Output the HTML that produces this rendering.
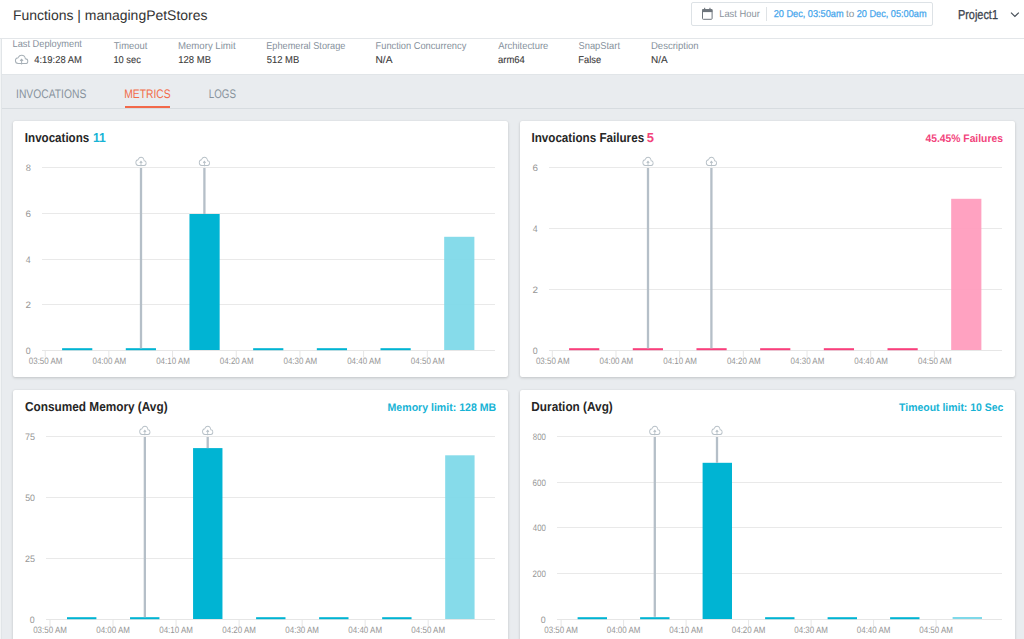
<!DOCTYPE html>
<html><head><meta charset="utf-8">
<style>
html,body{margin:0;padding:0;}
body{width:1024px;height:639px;overflow:hidden;position:relative;background:#e9ecef;font-family:'Liberation Sans', sans-serif;}
.a{position:absolute;}
.card{position:absolute;background:#fff;border-radius:2px;box-shadow:0 1px 3px rgba(0,0,0,0.17), 0 0 1px rgba(0,0,0,0.10);}
</style></head><body>
<div class="a" style="left:0;top:0;width:1024px;height:38px;background:#fff;"></div>
<div class="a" style="left:0;top:38px;width:1024px;height:1px;background:#e3e6e9;"></div>
<div class="a" style="left:0;top:39px;width:1px;height:600px;background:#f3f5f6;"></div>
<div class="a" style="left:1px;top:39px;width:1px;height:600px;background:#e1e5e8;"></div>
<div class="a" style="left:2px;top:39px;width:1022px;height:35px;background:#fff;"></div>
<div class="a" style="left:2px;top:74px;width:1022px;height:1px;background:#e1e5e8;"></div>
<div class="a" style="left:2px;top:108px;width:1022px;height:1px;background:#d7dce0;"></div>
<div class="a" style="left:691px;top:2px;width:240px;height:22px;border:1px solid #dde2e6;border-radius:2px;background:#fff;"></div>
<svg class="a" style="left:700px;top:6px" width="15" height="16" viewBox="0 0 15 16">
 <rect x="2.5" y="3.6" width="9.6" height="9.7" rx="0.8" fill="none" stroke="#6e757c" stroke-width="1"/>
 <rect x="2.2" y="3.2" width="10.2" height="2.9" fill="#6e757c"/>
 <rect x="4.1" y="1.8" width="1.1" height="2" fill="#6e757c"/><rect x="9.4" y="1.8" width="1.1" height="2" fill="#6e757c"/>
</svg>
<div class="a" style="left:766px;top:7px;width:1px;height:14px;background:#dfe3e6;"></div>
<svg class="a" style="left:1010px;top:11px" width="10" height="7" viewBox="0 0 10 7"><path d="M1,1.6 L4.9,5.4 L8.8,1.6" fill="none" stroke="#454d56" stroke-width="1.15"/></svg>
<svg class="a" style="left:0;top:0" width="40" height="80"><g transform="translate(14.84,52.20) scale(0.5636,0.6000)" fill="none" stroke="#a7b0b7" stroke-width="1.72"><path d="M18.7,11 C18.2,7.6 15.4,5 12,5 C9.5,5 7.3,6.4 6.2,8.5 L5.8,9.1 C3.1,9.4 1,11.4 1,14 C1,16.8 3.2,19 6,19 H19 C21.2,19 23,17.2 23,15 C23,12.9 21.4,11.2 19.3,11.1 Z"/><path d="M12,20.5 V11.8 M9.3,14.5 L12,11.8 L14.7,14.5"/></g></svg>
<div class="a" style="left:125px;top:106px;width:45px;height:2px;background:#f2694a;"></div>

<div class="card" style="left:13px;top:121px;width:495px;height:256px;"></div>
<div class="card" style="left:520px;top:121px;width:495px;height:256px;"></div>
<div class="card" style="left:13px;top:390px;width:495px;height:260px;"></div>
<div class="card" style="left:520px;top:390px;width:495px;height:260px;"></div>

<svg class="a" style="left:0;top:0;font-family:'Liberation Sans', sans-serif;text-rendering:geometricPrecision" width="1024" height="639" viewBox="0 0 1024 639">
<rect x="42" y="304.00" width="453" height="1" fill="#e9e9e9"/>
<rect x="42" y="259.00" width="453" height="1" fill="#e9e9e9"/>
<rect x="42" y="213.00" width="453" height="1" fill="#e9e9e9"/>
<rect x="42" y="167.00" width="453" height="1" fill="#e9e9e9"/>
<rect x="42" y="350.00" width="453" height="1" fill="#e6e6e6"/>
<rect x="44.70" y="350.50" width="1" height="7" fill="#e6e6e6"/>
<rect x="108.38" y="350.50" width="1" height="7" fill="#e6e6e6"/>
<rect x="172.06" y="350.50" width="1" height="7" fill="#e6e6e6"/>
<rect x="235.74" y="350.50" width="1" height="7" fill="#e6e6e6"/>
<rect x="299.42" y="350.50" width="1" height="7" fill="#e6e6e6"/>
<rect x="363.10" y="350.50" width="1" height="7" fill="#e6e6e6"/>
<rect x="426.78" y="350.50" width="1" height="7" fill="#e6e6e6"/>
<rect x="62.10" y="348.20" width="30.2" height="2" fill="#00b4d3"/>
<rect x="125.78" y="348.20" width="30.2" height="2" fill="#00b4d3"/>
<rect x="189.46" y="214.00" width="30.2" height="136.00" fill="#00b4d3"/>
<rect x="253.14" y="348.20" width="30.2" height="2" fill="#00b4d3"/>
<rect x="316.82" y="348.20" width="30.2" height="2" fill="#00b4d3"/>
<rect x="380.50" y="348.20" width="30.2" height="2" fill="#00b4d3"/>
<rect x="444.18" y="236.80" width="30.2" height="113.20" fill="#7dd8e8" fill-opacity="0.93"/>
<rect x="139.85" y="168.00" width="2.3" height="180.30" fill="#b5bfc8"/>
<g transform="translate(135.38,154.41) scale(0.4682,0.5786)" fill="none" stroke="#b7c0c7" stroke-width="1.82"><path d="M18.7,11 C18.2,7.6 15.4,5 12,5 C9.5,5 7.3,6.4 6.2,8.5 L5.8,9.1 C3.1,9.4 1,11.4 1,14 C1,16.8 3.2,19 6,19 H19 C21.2,19 23,17.2 23,15 C23,12.9 21.4,11.2 19.3,11.1 Z"/><path d="M12,20.5 V11.8 M9.3,14.5 L12,11.8 L14.7,14.5"/></g>
<rect x="203.25" y="168.00" width="2.3" height="46.00" fill="#b5bfc8"/>
<g transform="translate(198.78,154.41) scale(0.4682,0.5786)" fill="none" stroke="#b7c0c7" stroke-width="1.82"><path d="M18.7,11 C18.2,7.6 15.4,5 12,5 C9.5,5 7.3,6.4 6.2,8.5 L5.8,9.1 C3.1,9.4 1,11.4 1,14 C1,16.8 3.2,19 6,19 H19 C21.2,19 23,17.2 23,15 C23,12.9 21.4,11.2 19.3,11.1 Z"/><path d="M12,20.5 V11.8 M9.3,14.5 L12,11.8 L14.7,14.5"/></g>
<rect x="549" y="289.00" width="453" height="1" fill="#e9e9e9"/>
<rect x="549" y="228.00" width="453" height="1" fill="#e9e9e9"/>
<rect x="549" y="167.00" width="453" height="1" fill="#e9e9e9"/>
<rect x="549" y="350.00" width="453" height="1" fill="#e6e6e6"/>
<rect x="551.80" y="350.50" width="1" height="7" fill="#e6e6e6"/>
<rect x="615.48" y="350.50" width="1" height="7" fill="#e6e6e6"/>
<rect x="679.16" y="350.50" width="1" height="7" fill="#e6e6e6"/>
<rect x="742.84" y="350.50" width="1" height="7" fill="#e6e6e6"/>
<rect x="806.52" y="350.50" width="1" height="7" fill="#e6e6e6"/>
<rect x="870.20" y="350.50" width="1" height="7" fill="#e6e6e6"/>
<rect x="933.88" y="350.50" width="1" height="7" fill="#e6e6e6"/>
<rect x="569.10" y="348.20" width="30.2" height="2" fill="#f93f7c"/>
<rect x="632.78" y="348.20" width="30.2" height="2" fill="#f93f7c"/>
<rect x="696.46" y="348.20" width="30.2" height="2" fill="#f93f7c"/>
<rect x="760.14" y="348.20" width="30.2" height="2" fill="#f93f7c"/>
<rect x="823.82" y="348.20" width="30.2" height="2" fill="#f93f7c"/>
<rect x="887.50" y="348.20" width="30.2" height="2" fill="#f93f7c"/>
<rect x="951.18" y="198.80" width="30.2" height="151.20" fill="#ff9bbc" fill-opacity="0.93"/>
<rect x="646.85" y="168.00" width="2.3" height="180.30" fill="#b5bfc8"/>
<g transform="translate(642.38,154.41) scale(0.4682,0.5786)" fill="none" stroke="#b7c0c7" stroke-width="1.82"><path d="M18.7,11 C18.2,7.6 15.4,5 12,5 C9.5,5 7.3,6.4 6.2,8.5 L5.8,9.1 C3.1,9.4 1,11.4 1,14 C1,16.8 3.2,19 6,19 H19 C21.2,19 23,17.2 23,15 C23,12.9 21.4,11.2 19.3,11.1 Z"/><path d="M12,20.5 V11.8 M9.3,14.5 L12,11.8 L14.7,14.5"/></g>
<rect x="710.25" y="168.00" width="2.3" height="180.30" fill="#b5bfc8"/>
<g transform="translate(705.78,154.41) scale(0.4682,0.5786)" fill="none" stroke="#b7c0c7" stroke-width="1.82"><path d="M18.7,11 C18.2,7.6 15.4,5 12,5 C9.5,5 7.3,6.4 6.2,8.5 L5.8,9.1 C3.1,9.4 1,11.4 1,14 C1,16.8 3.2,19 6,19 H19 C21.2,19 23,17.2 23,15 C23,12.9 21.4,11.2 19.3,11.1 Z"/><path d="M12,20.5 V11.8 M9.3,14.5 L12,11.8 L14.7,14.5"/></g>
<rect x="46" y="558.00" width="449" height="1" fill="#e9e9e9"/>
<rect x="46" y="497.00" width="449" height="1" fill="#e9e9e9"/>
<rect x="46" y="436.00" width="449" height="1" fill="#e9e9e9"/>
<rect x="46" y="619.00" width="449" height="1" fill="#e6e6e6"/>
<rect x="49.50" y="619.50" width="1" height="7" fill="#e6e6e6"/>
<rect x="112.53" y="619.50" width="1" height="7" fill="#e6e6e6"/>
<rect x="175.56" y="619.50" width="1" height="7" fill="#e6e6e6"/>
<rect x="238.59" y="619.50" width="1" height="7" fill="#e6e6e6"/>
<rect x="301.62" y="619.50" width="1" height="7" fill="#e6e6e6"/>
<rect x="364.65" y="619.50" width="1" height="7" fill="#e6e6e6"/>
<rect x="427.68" y="619.50" width="1" height="7" fill="#e6e6e6"/>
<rect x="67.00" y="617.20" width="29.4" height="2" fill="#00b4d3"/>
<rect x="130.03" y="617.20" width="29.4" height="2" fill="#00b4d3"/>
<rect x="193.06" y="448.10" width="29.4" height="170.90" fill="#00b4d3"/>
<rect x="256.09" y="617.20" width="29.4" height="2" fill="#00b4d3"/>
<rect x="319.12" y="617.20" width="29.4" height="2" fill="#00b4d3"/>
<rect x="382.15" y="617.20" width="29.4" height="2" fill="#00b4d3"/>
<rect x="445.18" y="455.30" width="29.4" height="163.70" fill="#7dd8e8" fill-opacity="0.93"/>
<rect x="143.70" y="437.00" width="2.3" height="180.20" fill="#b5bfc8"/>
<g transform="translate(139.23,423.41) scale(0.4682,0.5786)" fill="none" stroke="#b7c0c7" stroke-width="1.82"><path d="M18.7,11 C18.2,7.6 15.4,5 12,5 C9.5,5 7.3,6.4 6.2,8.5 L5.8,9.1 C3.1,9.4 1,11.4 1,14 C1,16.8 3.2,19 6,19 H19 C21.2,19 23,17.2 23,15 C23,12.9 21.4,11.2 19.3,11.1 Z"/><path d="M12,20.5 V11.8 M9.3,14.5 L12,11.8 L14.7,14.5"/></g>
<rect x="206.55" y="437.00" width="2.3" height="11.10" fill="#b5bfc8"/>
<g transform="translate(202.08,423.41) scale(0.4682,0.5786)" fill="none" stroke="#b7c0c7" stroke-width="1.82"><path d="M18.7,11 C18.2,7.6 15.4,5 12,5 C9.5,5 7.3,6.4 6.2,8.5 L5.8,9.1 C3.1,9.4 1,11.4 1,14 C1,16.8 3.2,19 6,19 H19 C21.2,19 23,17.2 23,15 C23,12.9 21.4,11.2 19.3,11.1 Z"/><path d="M12,20.5 V11.8 M9.3,14.5 L12,11.8 L14.7,14.5"/></g>
<rect x="557" y="573.00" width="445" height="1" fill="#e9e9e9"/>
<rect x="557" y="527.00" width="445" height="1" fill="#e9e9e9"/>
<rect x="557" y="482.00" width="445" height="1" fill="#e9e9e9"/>
<rect x="557" y="436.00" width="445" height="1" fill="#e9e9e9"/>
<rect x="557" y="619.00" width="445" height="1" fill="#e6e6e6"/>
<rect x="560.60" y="619.50" width="1" height="7" fill="#e6e6e6"/>
<rect x="623.10" y="619.50" width="1" height="7" fill="#e6e6e6"/>
<rect x="685.60" y="619.50" width="1" height="7" fill="#e6e6e6"/>
<rect x="748.10" y="619.50" width="1" height="7" fill="#e6e6e6"/>
<rect x="810.60" y="619.50" width="1" height="7" fill="#e6e6e6"/>
<rect x="873.10" y="619.50" width="1" height="7" fill="#e6e6e6"/>
<rect x="935.60" y="619.50" width="1" height="7" fill="#e6e6e6"/>
<rect x="577.60" y="617.20" width="29.4" height="2" fill="#00b4d3"/>
<rect x="640.10" y="617.20" width="29.4" height="2" fill="#00b4d3"/>
<rect x="702.60" y="462.80" width="29.4" height="156.20" fill="#00b4d3"/>
<rect x="765.10" y="617.20" width="29.4" height="2" fill="#00b4d3"/>
<rect x="827.60" y="617.20" width="29.4" height="2" fill="#00b4d3"/>
<rect x="890.10" y="617.20" width="29.4" height="2" fill="#00b4d3"/>
<rect x="952.60" y="617.00" width="29.4" height="2" fill="#00b4d3" fill-opacity="0.5"/>
<rect x="653.65" y="437.00" width="2.3" height="179.80" fill="#b5bfc8"/>
<g transform="translate(649.18,423.41) scale(0.4682,0.5786)" fill="none" stroke="#b7c0c7" stroke-width="1.82"><path d="M18.7,11 C18.2,7.6 15.4,5 12,5 C9.5,5 7.3,6.4 6.2,8.5 L5.8,9.1 C3.1,9.4 1,11.4 1,14 C1,16.8 3.2,19 6,19 H19 C21.2,19 23,17.2 23,15 C23,12.9 21.4,11.2 19.3,11.1 Z"/><path d="M12,20.5 V11.8 M9.3,14.5 L12,11.8 L14.7,14.5"/></g>
<rect x="715.85" y="437.00" width="2.3" height="25.80" fill="#b5bfc8"/>
<g transform="translate(711.38,423.41) scale(0.4682,0.5786)" fill="none" stroke="#b7c0c7" stroke-width="1.82"><path d="M18.7,11 C18.2,7.6 15.4,5 12,5 C9.5,5 7.3,6.4 6.2,8.5 L5.8,9.1 C3.1,9.4 1,11.4 1,14 C1,16.8 3.2,19 6,19 H19 C21.2,19 23,17.2 23,15 C23,12.9 21.4,11.2 19.3,11.1 Z"/><path d="M12,20.5 V11.8 M9.3,14.5 L12,11.8 L14.7,14.5"/></g>
<text transform="translate(12.90,20.00) scale(0.9974,1)" font-size="14" fill="#333">Functions | managingPetStores</text>
<text transform="translate(719.20,17.00) scale(0.9365,1)" font-size="10" fill="#8a939c">Last Hour</text>
<text transform="translate(773.67,17.00) scale(0.9179,1)" font-size="10" fill="#44a5ec" stroke="#44a5ec" stroke-width="0.25">20 Dec, 03:50am</text>
<text x="845.90" y="17.00" font-size="10" fill="#8a939c">to</text>
<text transform="translate(856.67,17.00) scale(0.9179,1)" font-size="10" fill="#44a5ec" stroke="#44a5ec" stroke-width="0.25">20 Dec, 05:00am</text>
<text transform="translate(957.97,18.90) scale(0.8387,1)" font-size="13" fill="#3b434d" stroke="#3b434d" stroke-width="0.3">Project1</text>
<text transform="translate(12.51,47.00) scale(0.9253,1)" font-size="10" fill="#86919c">Last Deployment</text>
<text transform="translate(113.66,48.70) scale(0.9408,1)" font-size="10" fill="#86919c">Timeout</text>
<text transform="translate(178.03,48.70) scale(0.9595,1)" font-size="10" fill="#86919c">Memory Limit</text>
<text transform="translate(266.21,48.70) scale(0.9188,1)" font-size="10" fill="#86919c">Ephemeral Storage</text>
<text transform="translate(375.55,48.70) scale(0.9278,1)" font-size="10" fill="#86919c">Function Concurrency</text>
<text transform="translate(498.20,48.70) scale(0.9377,1)" font-size="10" fill="#86919c">Architecture</text>
<text transform="translate(578.53,48.70) scale(0.9318,1)" font-size="10" fill="#86919c">SnapStart</text>
<text transform="translate(650.99,48.70) scale(0.9518,1)" font-size="10" fill="#86919c">Description</text>
<text transform="translate(34.30,62.80) scale(0.9380,1)" font-size="10" fill="#3a3a3a" stroke="#3a3a3a" stroke-width="0.1">4:19:28 AM</text>
<text transform="translate(113.44,62.80) scale(0.9287,1)" font-size="10" fill="#3a3a3a" stroke="#3a3a3a" stroke-width="0.1">10 sec</text>
<text transform="translate(178.27,62.80) scale(0.9507,1)" font-size="10" fill="#3a3a3a" stroke="#3a3a3a" stroke-width="0.1">128 MB</text>
<text transform="translate(266.66,62.80) scale(0.9437,1)" font-size="10" fill="#3a3a3a" stroke="#3a3a3a" stroke-width="0.1">512 MB</text>
<text transform="translate(375.49,62.80) scale(1.0156,1)" font-size="10" fill="#3a3a3a" stroke="#3a3a3a" stroke-width="0.1">N/A</text>
<text transform="translate(497.96,62.80) scale(0.9464,1)" font-size="10" fill="#3a3a3a" stroke="#3a3a3a" stroke-width="0.1">arm64</text>
<text transform="translate(578.30,62.80) scale(0.9319,1)" font-size="10" fill="#3a3a3a" stroke="#3a3a3a" stroke-width="0.1">False</text>
<text transform="translate(650.95,62.80) scale(0.9937,1)" font-size="10" fill="#3a3a3a" stroke="#3a3a3a" stroke-width="0.1">N/A</text>
<text transform="translate(16.07,97.90) scale(0.8313,1)" font-size="12.4" fill="#88939d">INVOCATIONS</text>
<text transform="translate(124.27,97.90) scale(0.8313,1)" font-size="12.4" fill="#f26b48">METRICS</text>
<text transform="translate(208.81,97.90) scale(0.7879,1)" font-size="12.4" fill="#88939d">LOGS</text>
<text transform="translate(24.83,142.20) scale(0.8915,1)" font-size="13" font-weight="bold" fill="#262626">Invocations</text>
<text transform="translate(92.90,142.20) scale(0.9333,1)" font-size="13" font-weight="bold" fill="#17b3d5">11</text>
<text transform="translate(531.43,142.10) scale(0.8964,1)" font-size="13" font-weight="bold" fill="#262626">Invocations Failures</text>
<text transform="translate(646.85,142.10) scale(0.9926,1)" font-size="13" font-weight="bold" fill="#f2447c">5</text>
<text transform="translate(925.50,141.60) scale(0.9374,1)" font-size="11" font-weight="bold" fill="#f2447c">45.45% Failures</text>
<text transform="translate(25.05,410.60) scale(0.9079,1)" font-size="13" font-weight="bold" fill="#262626">Consumed Memory (Avg)</text>
<text transform="translate(387.58,410.50) scale(0.9598,1)" font-size="11" font-weight="bold" fill="#17b3d5">Memory limit: 128 MB</text>
<text transform="translate(531.32,410.60) scale(0.9073,1)" font-size="13" font-weight="bold" fill="#262626">Duration (Avg)</text>
<text transform="translate(899.10,410.60) scale(0.9489,1)" font-size="11" font-weight="bold" fill="#17b3d5">Timeout limit: 10 Sec</text>
<text transform="translate(28.78,363.90) scale(0.8684,1)" font-size="9.2" fill="#969696">03:50 AM</text>
<text transform="translate(92.46,363.90) scale(0.8684,1)" font-size="9.2" fill="#969696">04:00 AM</text>
<text transform="translate(156.14,363.90) scale(0.8684,1)" font-size="9.2" fill="#969696">04:10 AM</text>
<text transform="translate(219.82,363.90) scale(0.8684,1)" font-size="9.2" fill="#969696">04:20 AM</text>
<text transform="translate(283.50,363.90) scale(0.8684,1)" font-size="9.2" fill="#969696">04:30 AM</text>
<text transform="translate(347.18,363.90) scale(0.8684,1)" font-size="9.2" fill="#969696">04:40 AM</text>
<text transform="translate(410.86,363.90) scale(0.8684,1)" font-size="9.2" fill="#969696">04:50 AM</text>
<text transform="translate(25.86,354.00) scale(0.9474,1)" font-size="9.3" fill="#969696">0</text>
<text transform="translate(25.57,308.00) scale(1.0588,1)" font-size="9.3" fill="#969696">2</text>
<text transform="translate(25.86,263.00) scale(0.9474,1)" font-size="9.3" fill="#969696">4</text>
<text transform="translate(25.57,217.00) scale(1.0588,1)" font-size="9.3" fill="#969696">6</text>
<text x="25.85" y="171.00" font-size="9.3" fill="#969696">8</text>
<text transform="translate(535.88,363.90) scale(0.8684,1)" font-size="9.2" fill="#969696">03:50 AM</text>
<text transform="translate(599.56,363.90) scale(0.8684,1)" font-size="9.2" fill="#969696">04:00 AM</text>
<text transform="translate(663.24,363.90) scale(0.8684,1)" font-size="9.2" fill="#969696">04:10 AM</text>
<text transform="translate(726.92,363.90) scale(0.8684,1)" font-size="9.2" fill="#969696">04:20 AM</text>
<text transform="translate(790.60,363.90) scale(0.8684,1)" font-size="9.2" fill="#969696">04:30 AM</text>
<text transform="translate(854.28,363.90) scale(0.8684,1)" font-size="9.2" fill="#969696">04:40 AM</text>
<text transform="translate(917.96,363.90) scale(0.8684,1)" font-size="9.2" fill="#969696">04:50 AM</text>
<text transform="translate(532.86,354.00) scale(0.9474,1)" font-size="9.3" fill="#969696">0</text>
<text transform="translate(532.57,293.00) scale(1.0588,1)" font-size="9.3" fill="#969696">2</text>
<text transform="translate(532.86,232.00) scale(0.9474,1)" font-size="9.3" fill="#969696">4</text>
<text transform="translate(532.57,171.00) scale(1.0588,1)" font-size="9.3" fill="#969696">6</text>
<text transform="translate(33.18,632.90) scale(0.8684,1)" font-size="9.2" fill="#969696">03:50 AM</text>
<text transform="translate(96.21,632.90) scale(0.8684,1)" font-size="9.2" fill="#969696">04:00 AM</text>
<text transform="translate(159.24,632.90) scale(0.8684,1)" font-size="9.2" fill="#969696">04:10 AM</text>
<text transform="translate(222.27,632.90) scale(0.8684,1)" font-size="9.2" fill="#969696">04:20 AM</text>
<text transform="translate(285.30,632.90) scale(0.8684,1)" font-size="9.2" fill="#969696">04:30 AM</text>
<text transform="translate(348.33,632.90) scale(0.8684,1)" font-size="9.2" fill="#969696">04:40 AM</text>
<text transform="translate(411.36,632.90) scale(0.8684,1)" font-size="9.2" fill="#969696">04:50 AM</text>
<text transform="translate(29.86,623.00) scale(0.9474,1)" font-size="9.3" fill="#969696">0</text>
<text transform="translate(24.92,562.00) scale(0.9684,1)" font-size="9.3" fill="#969696">25</text>
<text transform="translate(25.16,501.00) scale(0.9436,1)" font-size="9.3" fill="#969696">50</text>
<text transform="translate(24.92,440.00) scale(0.9684,1)" font-size="9.3" fill="#969696">75</text>
<text transform="translate(544.28,632.90) scale(0.8684,1)" font-size="9.2" fill="#969696">03:50 AM</text>
<text transform="translate(606.78,632.90) scale(0.8684,1)" font-size="9.2" fill="#969696">04:00 AM</text>
<text transform="translate(669.28,632.90) scale(0.8684,1)" font-size="9.2" fill="#969696">04:10 AM</text>
<text transform="translate(731.78,632.90) scale(0.8684,1)" font-size="9.2" fill="#969696">04:20 AM</text>
<text transform="translate(794.28,632.90) scale(0.8684,1)" font-size="9.2" fill="#969696">04:30 AM</text>
<text transform="translate(856.78,632.90) scale(0.8684,1)" font-size="9.2" fill="#969696">04:40 AM</text>
<text transform="translate(919.28,632.90) scale(0.8684,1)" font-size="9.2" fill="#969696">04:50 AM</text>
<text transform="translate(540.86,623.00) scale(0.9474,1)" font-size="9.3" fill="#969696">0</text>
<text transform="translate(532.57,577.00) scale(0.8542,1)" font-size="9.3" fill="#969696">200</text>
<text transform="translate(532.79,531.00) scale(0.8400,1)" font-size="9.3" fill="#969696">400</text>
<text transform="translate(532.57,486.00) scale(0.8542,1)" font-size="9.3" fill="#969696">600</text>
<text transform="translate(532.79,440.00) scale(0.8400,1)" font-size="9.3" fill="#969696">800</text>
</svg>
</body></html>
